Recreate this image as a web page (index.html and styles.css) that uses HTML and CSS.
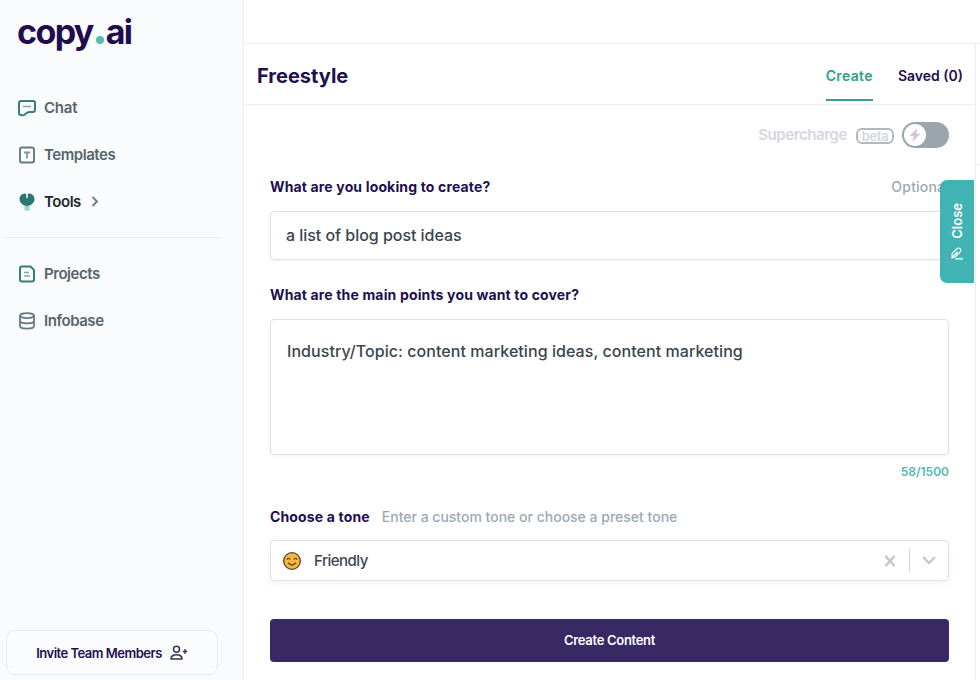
FILE: index.html
```html
<!DOCTYPE html>
<html lang="en">
<head>
<meta charset="UTF-8" />
<meta name="viewport" content="width=device-width, initial-scale=1.0" />
<title>Freestyle | copy.ai</title>

<link rel="stylesheet" href="styles.css">
</head>
<body>

<!-- ===== SIDEBAR ===== -->
<aside class="sidebar">
  <a href="#" class="logo"><span class="logo-copy">copy</span><span class="logo-dot"></span><span class="logo-ai">ai</span></a>

  <nav class="nav">
    <a href="#" class="nav-item">
      <svg class="icon" width="20" height="20" viewBox="0 0 20 20" fill="none">
        <path d="M4 3h12q2 0 2 2v7q0 2-2 2h-3.500q-1.200 0-2.400.8L7.500 16.800Q6.500 17.500 4.500 17.300Q2 17 2 15V5q0-2 2-2z" stroke="#347f7c" stroke-width="2"/>
        <path d="M6 8.500h8" stroke="#8fa3ab" stroke-width="1.500"/>
      </svg>
      <span class="t-chat">Chat</span>
    </a>
    <a href="#" class="nav-item">
      <svg class="icon" width="20" height="20" viewBox="0 0 20 20" fill="none">
        <rect x="3" y="2.500" width="14" height="15" rx="2" stroke="#657984" stroke-width="1.900"/>
        <path d="M7 7.500h6M10 7.500v6" stroke="#8497a0" stroke-width="1.800"/>
      </svg>
      <span>Templates</span>
    </a>
    <a href="#" class="nav-item active">
      <svg class="icon" width="20" height="20" viewBox="0 0 20 20">
        <path d="M7.500 12h5v6q0 .6-.6.600H8.100q-.6 0-.6-.600z" fill="#8edccb"/>
        <path d="M7.800 1.500Q9.200 1.400 9.200 2.500V5.500q0 .7.8.7t.8-.7V2.500q0-1.100 1.400-1c3 .3 5.300 2.500 5.300 5.500 0 3.800-3.500 6.800-7.500 6.800S2.500 10.800 2.500 7c0-3 2.300-5.200 5.300-5.500z" fill="#2b7775"/>
      </svg>
      <span>Tools</span>
      <svg class="chevron" width="8" height="11" viewBox="0 0 8 11" fill="none"><path d="M1.500 1l4.500 4.500L1.500 10" stroke="#6f7b82" stroke-width="1.900"/></svg>
    </a>
  </nav>

  <nav class="nav nav-second">
    <a href="#" class="nav-item">
      <svg class="icon" width="20" height="20" viewBox="0 0 20 20" fill="none">
        <path d="M5 2.500h8.500L17 6v9.500q0 2-2 2H5q-2 0-2-2v-11q0-2 2-2z" stroke="#347f7c" stroke-width="2" stroke-linejoin="round"/>
        <path d="M7 8.500h5M7 12h6" stroke="#8fa3ab" stroke-width="1.500"/>
      </svg>
      <span>Projects</span>
    </a>
    <a href="#" class="nav-item">
      <svg class="icon" width="20" height="20" viewBox="0 0 20 20" fill="none" stroke="#657984" stroke-width="1.800">
        <ellipse cx="10" cy="4.600" rx="7" ry="2.500"/>
        <path d="M3 4.600v10.500c0 1.600 3.100 2.600 7 2.600s7-1 7-2.600V4.600M3 9.800c0 1.500 3.100 2.600 7 2.600s7-1.100 7-2.600"/>
      </svg>
      <span>Infobase</span>
    </a>
  </nav>

  <button class="invite">
    <span class="t-invite">Invite Team Members</span>
    <svg width="18" height="16" viewBox="0 0 18 16" fill="none" stroke="#35304f" stroke-width="1.500">
      <circle cx="6.500" cy="4.300" r="3"/>
      <path d="M1 14c0-2.800 2-4.300 5.500-4.300S12 11.200 12 14z" stroke-linejoin="round"/>
      <path d="M12.800 6.500h4.400M15 4.300v4.400"/>
    </svg>
  </button>
</aside>

<!-- ===== MAIN ===== -->
<div class="main">
  <div class="topbar"></div>
  <div class="columns">
    <main class="panel">
      <header class="panel-head">
        <h1>Freestyle</h1>
        <div class="tabs">
          <a href="#" class="tab selected">Create</a>
          <a href="#" class="tab">Saved (0)</a>
        </div>
      </header>

      <form class="form">
        <div class="supercharge">
          <span class="t-super">Supercharge</span>
          <span class="beta">beta</span>
          <span class="toggle">
            <span class="knob">
              <svg width="12" height="14" viewBox="0 0 12 14"><path d="M8.500 0L.5 8h4.200L3.300 14l8.200-8.500H7.200z" fill="#c9c9cf"/></svg>
            </span>
          </span>
        </div>

        <div class="label-row">
          <label>What are you looking to create?</label>
          <span class="hint t-optional">Optional</span>
        </div>
        <div class="input"><span>a list of blog post ideas</span></div>

        <div class="label-row second">
          <label>What are the main points you want to cover?</label>
        </div>
        <div class="input textarea"><span>Industry/Topic: content marketing ideas, content marketing</span></div>
        <div class="counter">58/1500</div>

        <div class="label-row tone">
          <label>Choose a tone</label>
          <span class="hint">Enter a custom tone or choose a preset tone</span>
        </div>
        <div class="select">
          <svg width="20" height="20" viewBox="0 0 20 20" fill="none">
            <circle cx="10" cy="10" r="8.300" fill="#f5b83d" stroke="#51432f" stroke-width="1.300"/>
            <path d="M4.800 8.600q1.700-2.300 3.400 0M11.800 8.600q1.700-2.300 3.400 0" stroke="#684719" stroke-width="1.200"/>
            <path d="M6 11.800q4 4.400 8 0" stroke="#684719" stroke-width="1.300"/>
          </svg>
          <span class="value">Friendly</span>
          <svg class="clear" width="12" height="12" viewBox="0 0 12 12" fill="none"><path d="M1.500 1l9 10M10.500 1l-9 10" stroke="#c3c5c7" stroke-width="2.400"/></svg>
          <span class="separator"></span>
          <svg width="14" height="9" viewBox="0 0 14 9" fill="none"><path d="M1.200 1.200L7 7l5.800-5.800" stroke="#c6c8ca" stroke-width="2.400"/></svg>
        </div>

        <button type="button" class="submit">Create Content</button>
      </form>
    </main>
    <div class="gutter"></div>
  </div>
</div>

<!-- floating drawer handle -->
<div class="close-tab">
  <svg width="14" height="13" viewBox="0 0 14 13" fill="none" stroke="#fff" stroke-width="1.200">
    <path d="M2 11l.2-4.500 5-5q1.600-1.100 2.900.2t.2 2.900L5.500 9.800z"/>
    <path d="M2 11l5.600-6.300M5.200 7.400h2.600M5 11.800h8"/>
  </svg>
  <span class="t-close">Close</span>
</div>

</body>
</html>
```
FILE: styles.css
```css
:root{
  --navy:#220f50;
  --teal:#41b3b2;
  --line:#e9eef0;
  --border:#dfe1e8;
  --muted:#9ba9b3;
}
*{box-sizing:border-box;}
body{
  margin:0;height:680px;display:flex;overflow:hidden;
  font-family:Inter,"Liberation Sans",sans-serif;
  font-size:15px;color:#3a454f;background:#fff;
}
a{text-decoration:none;color:inherit;}
button{font-family:inherit;}
svg{flex:none;display:block;}
span,label,h1{white-space:nowrap;}

/* sidebar */
.sidebar{
  width:244px;flex:none;display:flex;flex-direction:column;
  background:#f9fbfd;border-right:1px solid var(--line);
}
.logo{
  display:flex;height:84px;padding:11px 0 0 17px;
  font-size:34px;line-height:41px;font-weight:700;color:#220c4e;
}
.logo-dot{width:8px;height:8px;border-radius:50%;background:#53bcb0;margin:25px 2px 0 3px;}
.logo-copy{letter-spacing:-1.600px;}
.logo-ai{letter-spacing:-1.800px;}
.nav{width:213px;margin-left:5px;}
.nav-item{
  height:47px;display:flex;align-items:center;padding-left:12px;
  font-weight:600;letter-spacing:-.450px;color:#57646c;
}
.t-chat{letter-spacing:-.2px;}
.icon{margin-right:7px;}
.active{color:#20262b;}
.chevron{margin-left:10px;}
.nav-second{border-top:1px solid #e8ecef;margin-top:12px;padding-top:12px;}
.invite{
  width:212px;height:45px;margin:auto 0 5px 6px;
  display:flex;align-items:center;justify-content:center;gap:8px;
  border:1px solid #e7eaed;border-radius:9px;background:#fbfcfd;
  font-size:13px;font-weight:600;color:var(--navy);
}
.t-invite{letter-spacing:-.5px;}

/* main panel */
.main{flex:1;display:flex;flex-direction:column;}
.topbar{height:44px;flex:none;border-bottom:1px solid var(--line);}
.columns{flex:1;display:flex;}
.panel{flex:1;border-right:1px solid var(--line);}
.gutter{width:4px;height:121px;border-bottom:1px solid var(--line);}
.panel-head{
  height:61px;display:flex;align-items:center;justify-content:space-between;
  padding:0 12px 0 13px;border-bottom:1px solid var(--line);
}
h1{margin:0;padding-top:3px;font-size:20px;line-height:26px;font-weight:700;color:var(--navy);}
.tabs{display:flex;gap:25px;height:60px;}
.tab{height:57px;line-height:64px;font-size:14px;font-weight:600;color:var(--navy);}
.selected{letter-spacing:.350px;color:#2da18d;border-bottom:2px solid #3b9d97;}

/* form */
.form{padding:16px 26px 0 26px;}
.supercharge{
  height:27px;display:flex;align-items:center;justify-content:flex-end;
  font-weight:600;color:#d5d6df;
}
.t-super{letter-spacing:-.4px;}
.beta{
  width:38px;height:16px;margin:2px 8px 0 9px;text-align:center;
  border:2px solid #b4b9c0;border-radius:6px;
  font-size:13px;line-height:12px;letter-spacing:-.3px;
}
.toggle{width:47px;height:26px;padding:2px;border-radius:13px;background:#9ca5ab;}
.knob{
  width:22px;height:22px;border-radius:50%;background:#fff;
  display:flex;align-items:center;justify-content:center;
}
.label-row{
  height:20px;margin-top:28px;display:flex;align-items:center;
  justify-content:space-between;font-size:14px;
}
label{font-weight:700;letter-spacing:.150px;color:var(--navy);}
.hint{color:var(--muted);font-weight:500;}
.t-optional{letter-spacing:.2px;}
.input{
  height:49px;margin-top:15px;padding:0 15px;
  border:1px solid var(--border);border-radius:4px;
  font-size:16px;line-height:47px;font-weight:500;letter-spacing:-.040px;
  box-shadow:0 1px 3px rgba(40,40,80,.05);
}
.second{margin-top:24px;}
.textarea{height:136px;padding:0 16px;line-height:63px;letter-spacing:.060px;}
.counter{
  margin-top:8px;text-align:right;
  font-size:12px;line-height:18px;font-weight:600;color:#55b8b0;
}
.tone{margin-top:25px;justify-content:flex-start;gap:12px;}
.select{
  height:41px;margin-top:14px;padding:0 12px 0 11px;display:flex;align-items:center;
  border:1px solid var(--border);border-radius:4px;
  box-shadow:0 3px 6px rgba(40,40,80,.05);
}
.value{margin:-1px 0 0 12px;font-weight:500;letter-spacing:-.5px;}
.clear{margin-left:auto;}
.separator{width:1px;height:23px;background:#d3d5d9;margin:0 12px 0 13px;}
.submit{
  display:block;width:100%;height:43px;margin-top:38px;padding:0 0 2px;
  border:0;border-radius:4px;background:#382864;
  color:#fff;font-size:13px;font-weight:600;letter-spacing:-.3px;
}

/* drawer handle sits over the form */
.close-tab{
  position:absolute;left:940px;top:180px;width:34px;height:103px;
  display:flex;flex-direction:column-reverse;align-items:center;justify-content:center;gap:8px;
  border-radius:7px 0 0 7px;background:var(--teal);color:#fff;
  font-size:13px;font-weight:600;
}
.t-close{writing-mode:vertical-rl;transform:rotate(180deg);}
```
